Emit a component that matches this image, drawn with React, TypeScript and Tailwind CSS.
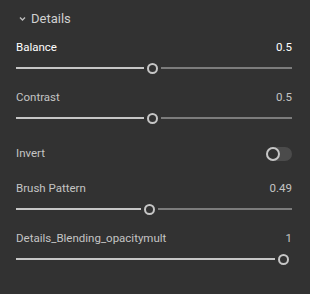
import React from 'react'

interface SliderRow {
  label: string
  value: number
  active?: boolean
}

const font = { fontFamily: 'Roboto, "Noto Sans", sans-serif' }

function Slider({ value }: { value: number }) {
  // thumb center runs from 5px to (width - 5px)
  const left = value * 262
  return (
    <div className="flex items-center h-[12px] mt-[4px]">
      <div className="h-[2px] bg-[#c6c6c6] shrink-0" style={{ width: Math.max(left - 3, 0) }} />
      <div className="w-[11px] h-[11px] rounded-full border-2 border-[#c6c6c6] bg-[#323232] shrink-0 mx-[3px]" />
      {value < 1 && <div className="h-[2px] bg-[#7c7c7c] flex-1" />}
    </div>
  )
}

function Row({ r, className }: { r: SliderRow; className: string }) {
  const color = r.active ? 'text-white' : 'text-[#c4c4c4]'
  return (
    <div className={className}>
      <div className={`flex justify-between h-[20px] items-center text-[11.5px] ${color}`}>
        <span>{r.label}</span>
        <span>{r.value}</span>
      </div>
      <Slider value={r.value} />
    </div>
  )
}

export default function App() {
  return (
    <div className="w-[310px] h-[294px] bg-[#323232] flex" style={font}>
      <div className="w-[2px] bg-[#282828]" />
      <div className="flex-1 pl-[16px] pr-[15px] pt-[9px]">
        <div className="flex items-center gap-[5px] h-[20px] pl-[3px]">
          <svg width="7" height="6" viewBox="0 0 7 6">
            <path d="M1 1.5 L3.5 4 L6 1.5" stroke="#bdbdbd" strokeWidth="1.4" fill="none" />
          </svg>
          <span className="text-[13px] text-[#d0d0d0]">Details</span>
        </div>
        <Row r={{ label: 'Balance', value: 0.5, active: true }} className="mt-[9px]" />
        <Row r={{ label: 'Contrast', value: 0.5 }} className="mt-[14px]" />
        <div className="flex justify-between items-center h-[20px] mt-[20px] text-[11.5px] text-[#c4c4c4]">
          <span>Invert</span>
          <div className="w-[26px] h-[14px] rounded-full bg-[#4b4b4b] flex items-center">
            <div className="w-[14px] h-[14px] rounded-full border-2 border-[#c6c6c6] bg-[#323232]" />
          </div>
        </div>
        <Row r={{ label: 'Brush Pattern', value: 0.49 }} className="mt-[15px]" />
        <Row r={{ label: 'Details_Blending_opacitymult', value: 1 }} className="mt-[14px]" />
      </div>
      <div className="w-[1px] bg-[#262626] mr-[4px]" />
    </div>
  )
}
